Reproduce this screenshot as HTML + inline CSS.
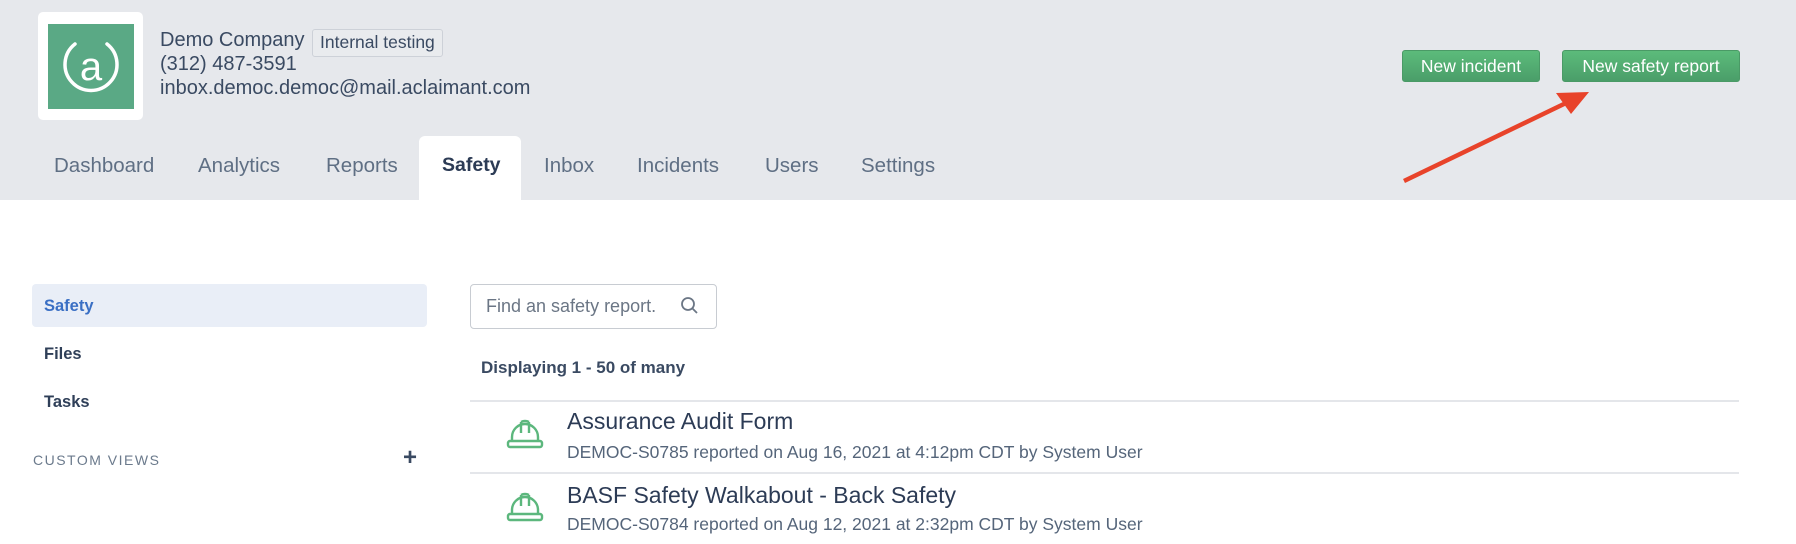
<!DOCTYPE html>
<html><head><meta charset="utf-8"><style>
*{margin:0;padding:0;box-sizing:border-box}
body{width:1796px;height:544px;overflow:hidden;background:#fff;font-family:"Liberation Sans",sans-serif;position:relative;color:#2f3f58}
.hdr{position:absolute;left:0;top:0;width:1796px;height:200px;background:#e6e8ec}
.a{position:absolute;white-space:nowrap}
.logo{left:38px;top:12px;width:105px;height:108px;background:#fff;border-radius:5px}
.green{left:48px;top:24px;width:86px;height:85px;background:#5aa985}
.t{font-size:20px;color:#3a4a62}
.badge{left:312px;top:29px;height:28px;padding:0 7px;border:1.5px solid #cdd1d8;border-radius:3px;background:#e9ebee;font-size:17.5px;line-height:25px;color:#3a4a62}
.btn{top:50px;height:32px;background:linear-gradient(#5cbb7b,#4a9e69);border:1px solid #4a9a66;border-radius:3px;color:#fff;font-size:17.5px;line-height:30px;text-align:center}
.tab{top:154px;font-size:20.5px;color:#5f6f84}
.stab{left:419px;top:136px;width:102px;height:64px;background:#fff;border-radius:6px 6px 0 0}
.side{left:44px;font-size:16.5px;color:#2f3f58;font-weight:bold}
.hl{left:32px;top:284px;width:395px;height:43px;background:#e9eef7;border-radius:4px}
.search{left:470px;top:284px;width:247px;height:45px;border:1.5px solid #c8ccd2;border-radius:4px}
.line{left:470px;width:1269px;height:1.5px;background:#e4e6ea}
.title{left:567px;font-size:23px;color:#2c3b55}
.sub{left:567px;font-size:17.5px;color:#55657a}
</style></head><body>
<div class="hdr"></div>
<div class="a logo"></div>
<div class="a green"></div>
<svg class="a" style="left:48px;top:24px" width="86" height="85" viewBox="0 0 86 85"><path d="M27 20 A26 26 0 1 0 59 20" fill="none" stroke="#fff" stroke-width="3.5" stroke-linecap="round"/><text x="43" y="56" text-anchor="middle" font-family="Liberation Sans" font-size="40" fill="#fff">a</text></svg>
<div class="a t" style="left:160px;top:29px">Demo Company</div>
<div class="a badge">Internal testing</div>
<div class="a t" style="left:160px;top:53px">(312) 487-3591</div>
<div class="a t" style="left:160px;top:77px">inbox.democ.democ@mail.aclaimant.com</div>
<div class="a btn" style="left:1402px;width:138px">New incident</div>
<div class="a btn" style="left:1562px;width:178px">New safety report</div>
<svg class="a" style="left:0;top:0" width="1796" height="544"><line x1="1404" y1="181" x2="1566" y2="103" stroke="#e8432a" stroke-width="4.5"/><polygon points="1589,92 1556,93 1571,114" fill="#e8432a"/></svg>
<div class="a stab"></div>
<div class="a tab" style="left:54px">Dashboard</div>
<div class="a tab" style="left:198px">Analytics</div>
<div class="a tab" style="left:326px">Reports</div>
<div class="a tab" style="left:442px;color:#2c3b55;font-weight:bold;font-size:19.5px">Safety</div>
<div class="a tab" style="left:544px">Inbox</div>
<div class="a tab" style="left:637px">Incidents</div>
<div class="a tab" style="left:765px">Users</div>
<div class="a tab" style="left:861px">Settings</div>
<div class="a hl"></div>
<div class="a side" style="top:297px;color:#3a6fc4">Safety</div>
<div class="a side" style="top:345px">Files</div>
<div class="a side" style="top:393px">Tasks</div>
<div class="a" style="left:33px;top:452px;font-size:14px;letter-spacing:1.5px;color:#6b7a8c">CUSTOM VIEWS</div>
<div class="a" style="left:403px;top:444px;font-size:24px;font-weight:bold;color:#3a4a62">+</div>
<div class="a search"></div>
<div class="a" style="left:486px;top:296px;font-size:18px;color:#6b7685">Find an safety report.</div>
<svg class="a" style="left:680px;top:296px" width="20" height="20" viewBox="0 0 20 20"><circle cx="8" cy="8" r="6" fill="none" stroke="#6b7685" stroke-width="1.8"/><line x1="12.5" y1="12.5" x2="17" y2="17" stroke="#6b7685" stroke-width="1.8"/></svg>
<div class="a" style="left:481px;top:358px;font-size:17px;font-weight:bold;color:#3a4a62">Displaying 1 - 50 of many</div>
<div class="a line" style="top:400px"></div>
<div class="a line" style="top:472px"></div>
<svg class="a" style="left:506px;top:418px" width="38" height="32" viewBox="0 0 38 32"><path d="M6 24 V19 A13 13 0 0 1 32 19 V24 M15 4 V15 M23 4 V15 M15 4 Q19 2 23 4" fill="none" stroke="#5cb77d" stroke-width="2.4"/><rect x="2" y="23" width="34" height="6" rx="2" fill="none" stroke="#5cb77d" stroke-width="2.4"/></svg>
<svg class="a" style="left:506px;top:491px" width="38" height="32" viewBox="0 0 38 32"><path d="M6 24 V19 A13 13 0 0 1 32 19 V24 M15 4 V15 M23 4 V15 M15 4 Q19 2 23 4" fill="none" stroke="#5cb77d" stroke-width="2.4"/><rect x="2" y="23" width="34" height="6" rx="2" fill="none" stroke="#5cb77d" stroke-width="2.4"/></svg>
<div class="a title" style="top:408px">Assurance Audit Form</div>
<div class="a sub" style="top:442px">DEMOC-S0785 reported on Aug 16, 2021 at 4:12pm CDT by System User</div>
<div class="a title" style="top:482px">BASF Safety Walkabout - Back Safety</div>
<div class="a sub" style="top:514px">DEMOC-S0784 reported on Aug 12, 2021 at 2:32pm CDT by System User</div>
</body></html>
